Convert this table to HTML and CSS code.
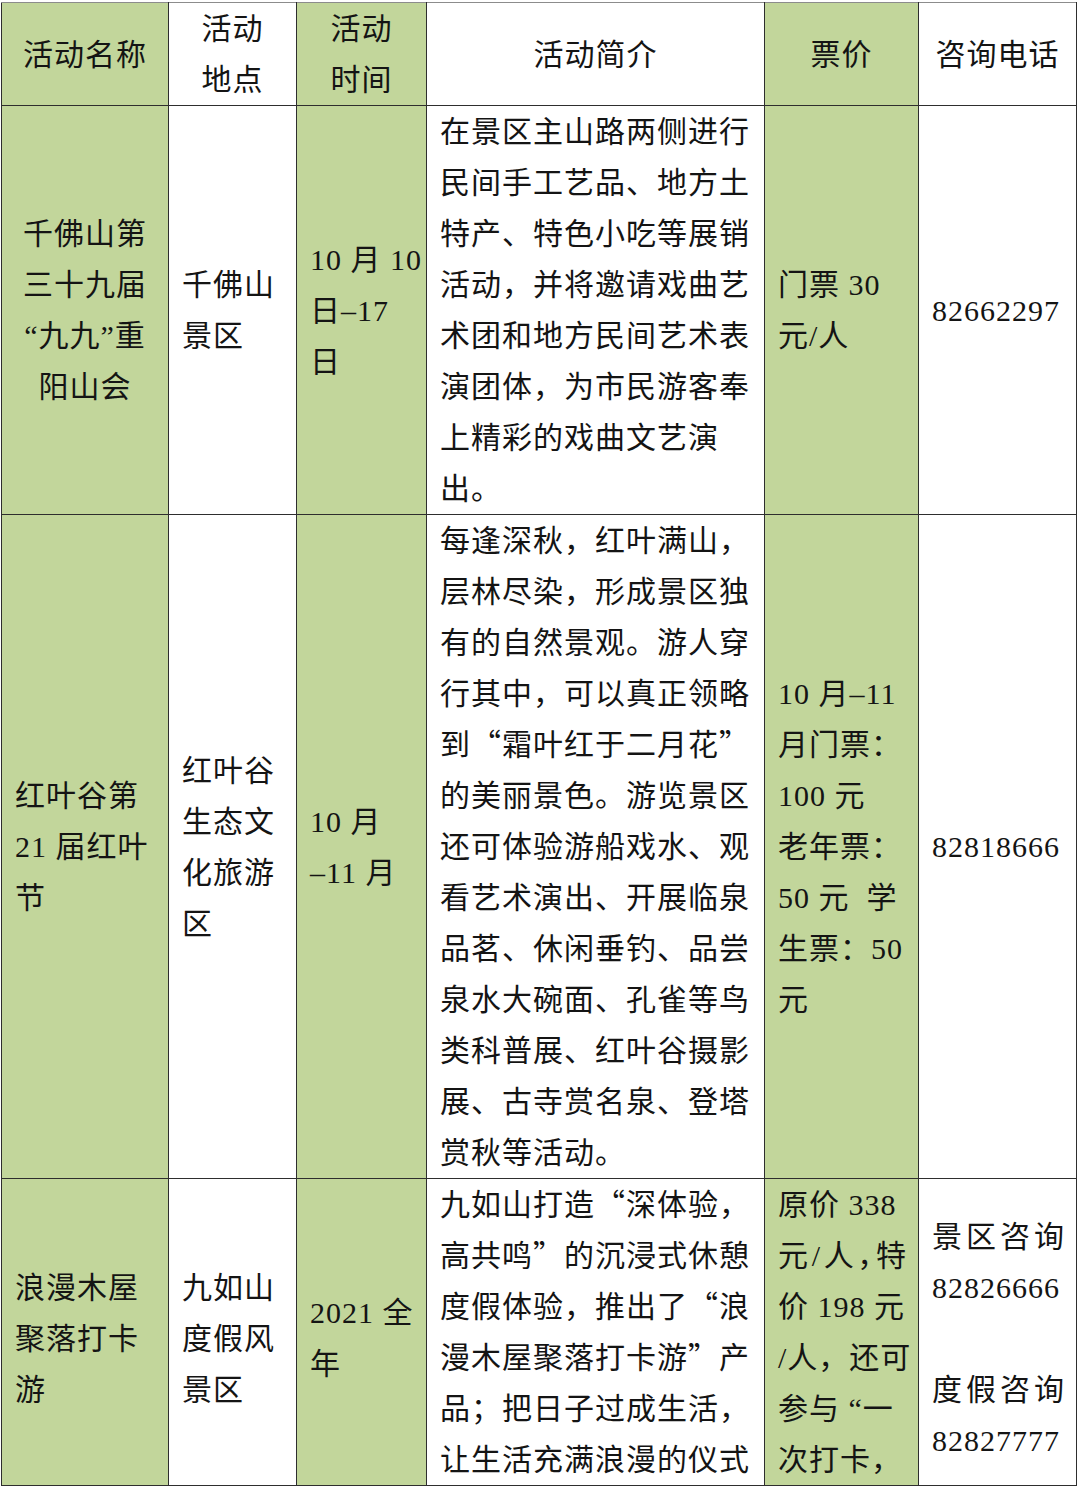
FILE: index.html
```html
<!DOCTYPE html>
<html lang="zh-CN">
<head>
<meta charset="utf-8">
<title>活动表</title>
<link rel="stylesheet" href="styles.css">
</head>
<body>
<div class="wrap">
<table class="events">
  <colgroup>
    <col class="c1"><col class="c2"><col class="c3"><col class="c4"><col class="c5"><col class="c6">
  </colgroup>
  <thead>
    <tr>
      <th class="g">活动名称</th>
      <th>活动<br>地点</th>
      <th class="g">活动<br>时间</th>
      <th>活动简介</th>
      <th class="g">票价</th>
      <th>咨询电话</th>
    </tr>
  </thead>
  <tbody>
    <tr>
      <td class="g center">千佛山第<br>三十九届<br>“九九”重<br>阳山会</td>
      <td>千佛山<br>景区</td>
      <td class="g">10 月 10<br>日–17<br>日</td>
      <td class="desc">在景区主山路两侧进行<br>民间手工艺品、地方土<br>特产、特色小吃等展销<br>活动，并将邀请戏曲艺<br>术团和地方民间艺术表<br>演团体，为市民游客奉<br>上精彩的戏曲文艺演<br>出。</td>
      <td class="g">门票 30<br>元/人</td>
      <td>82662297</td>
    </tr>
    <tr>
      <td class="g">红叶谷第<br>21 届红叶<br>节</td>
      <td>红叶谷<br>生态文<br>化旅游<br>区</td>
      <td class="g">10 月<br>–11 月</td>
      <td class="desc">每逢深秋，红叶满山，<br>层林尽染，形成景区独<br>有的自然景观。游人穿<br>行其中，可以真正领略<br>到<span class="fq">“</span>霜叶红于二月花<span class="fq">”</span><br>的美丽景色。游览景区<br>还可体验游船戏水、观<br>看艺术演出、开展临泉<br>品茗、休闲垂钓、品尝<br>泉水大碗面、孔雀等鸟<br>类科普展、红叶谷摄影<br>展、古寺赏名泉、登塔<br>赏秋等活动。</td>
      <td class="g">10 月–11<br>月门票：<br>100 元<br>老年票：<br>50 元&nbsp;&nbsp;学<br>生票：50<br>元</td>
      <td>82818666</td>
    </tr>
    <tr class="last">
      <td class="g low">浪漫木屋<br>聚落打卡<br>游</td>
      <td class="low">九如山<br>度假风<br>景区</td>
      <td class="g low">2021 全<br>年</td>
      <td class="desc">九如山打造<span class="fq">“</span>深体验，<br>高共鸣<span class="fq">”</span>的沉浸式休憩<br>度假体验，推出了<span class="fq">“</span>浪<br>漫木屋聚落打卡游<span class="fq">”</span>产<br>品；把日子过成生活，<br>让生活充满浪漫的仪式</td>
      <td class="g">原价 338<span class="jl">元/人<span class="hc">，</span>特</span>价 198 元<span class="jl">/人，还可</span>参与&nbsp;“一<br>次打卡，</td>
      <td class="low"><span class="jl">景区咨询</span>82826666<br>&nbsp;<br><span class="jl">度假咨询</span>82827777</td>
    </tr>
  </tbody>
</table>
</div>
</body>
</html>
```
FILE: styles.css
```css
html, body {
  margin: 0;
  padding: 0;
  background: #ffffff;
}

.wrap {
  padding: 2px 0 0 1px;
}

.events {
  border-collapse: collapse;
  table-layout: fixed;
  width: 1075px;
  font-family: "Liberation Serif", "Noto Sans CJK SC", serif;
  font-size: 30px;
  line-height: 51px;
  letter-spacing: 1px;
  color: #141414;
}

.c1 { width: 167px; }
.c2 { width: 128px; }
.c3 { width: 130px; }
.c4 { width: 338px; }
.c5 { width: 154px; }
.c6 { width: 158px; }

.events th,
.events td {
  border: 1px solid #2e2e2e;
  padding: 0 11px 0 13px;
  vertical-align: middle;
  white-space: nowrap;
  text-align: left;
  font-weight: normal;
  overflow: hidden;
}

.events th {
  text-align: center;
  padding: 0 6px;
  border-top-color: #8c8c8c;
}

.events .desc {
  vertical-align: top;
  padding-top: 0;
}

.g {
  background: #c2d69b;
}

.events .center {
  text-align: center;
  padding: 0 6px;
}

.events .low {
  padding-top: 12px;
}

.fq {
  font-family: "Noto Sans CJK SC", sans-serif;
  font-feature-settings: "fwid" 1;
  line-height: 1;
}

.hc {
  font-family: "Noto Sans CJK SC", sans-serif;
  font-feature-settings: "halt" 1;
  line-height: 1;
}

.jl {
  display: block;
  text-align: justify;
  text-align-last: justify;
}
```
